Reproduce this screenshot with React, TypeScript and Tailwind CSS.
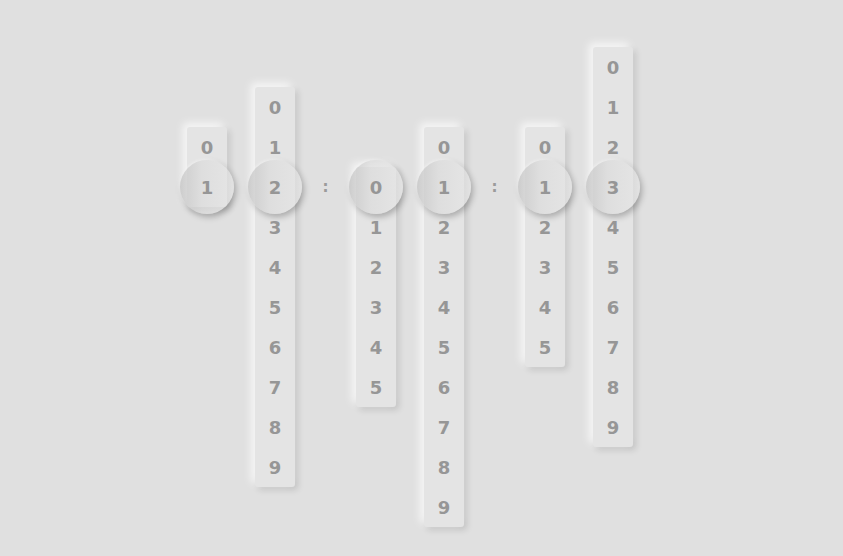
import React from "react";

type Col = { max: number; value: number };

const groups: Col[][] = [
  [
    { max: 1, value: 1 },
    { max: 9, value: 2 },
  ],
  [
    { max: 5, value: 0 },
    { max: 9, value: 1 },
  ],
  [
    { max: 5, value: 1 },
    { max: 9, value: 3 },
  ],
];

const CELL = 40;

function Column({ max, value }: Col) {
  const digits = Array.from({ length: max + 1 }, (_, i) => i);
  return (
    // shift the strip so the current digit sits on the highlight line
    <div className="relative w-10" style={{ marginTop: -value * CELL }}>
      <div className="rounded-[3px] bg-[#e4e4e4] shadow-[-4px_-4px_8px_rgba(255,255,255,0.75),3px_3px_6px_rgba(0,0,0,0.13)]">
        {digits.map((d) => (
          <div key={d} className="h-10" />
        ))}
      </div>
      <div
        className="absolute left-1/2 h-[54px] w-[54px] -translate-x-1/2 -translate-y-1/2 rounded-full bg-[linear-gradient(90deg,rgba(196,196,196,0.75),rgba(218,218,218,0.6)_40%,rgba(230,230,230,0.65))] shadow-[2px_3px_6px_rgba(0,0,0,0.26),-1px_-1px_3px_rgba(255,255,255,0.6)]"
        style={{ top: value * CELL + CELL / 2 }}
      />
      <div className="absolute inset-x-0 top-0">
        {digits.map((d) => (
          <div
            key={d}
            className="flex h-10 items-center justify-center text-[18px] font-bold text-[#969696]"
          >
            {d}
          </div>
        ))}
      </div>
    </div>
  );
}

export default function App() {
  return (
    <div className="h-[556px] w-[843px] bg-[#e0e0e0] font-['DejaVu_Sans',sans-serif]">
      <div className="flex items-start pl-[187px] pt-[167px]">
        {groups.map((pair, gi) => (
          <React.Fragment key={gi}>
            {gi > 0 && (
              <div className="flex h-10 w-[61px] items-center justify-center text-[15px] font-bold text-[#9b9b9b]">
                :
              </div>
            )}
            <div className="flex items-start gap-[28px]">
              {pair.map((c, ci) => (
                <Column key={ci} {...c} />
              ))}
            </div>
          </React.Fragment>
        ))}
      </div>
    </div>
  );
}
